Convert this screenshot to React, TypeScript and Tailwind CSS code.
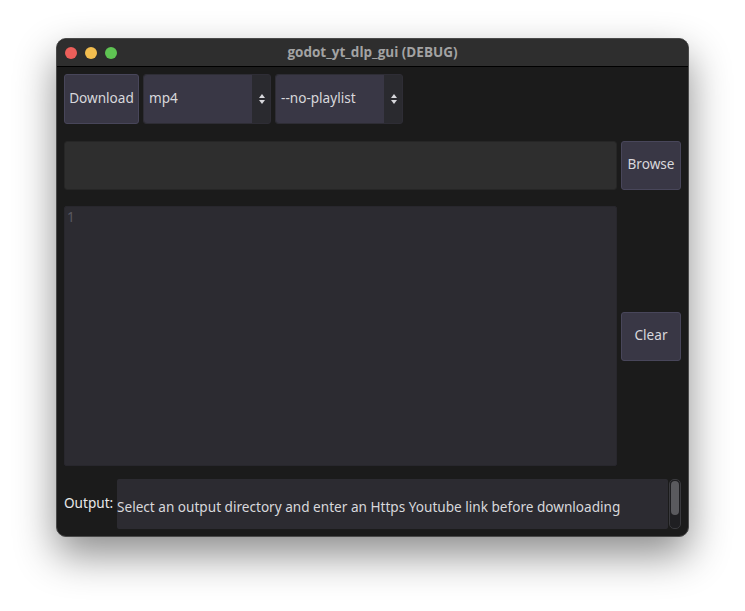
import React from "react";

const font = { fontFamily: '"Noto Sans", "Open Sans", sans-serif' };

function Button({ label, className = "" }: { label: string; className?: string }) {
  return (
    <div
      className={
        "flex items-center justify-center rounded-[3px] border border-[#48465a] bg-[#393745] text-[13.6px] text-[#d8d8dc] " +
        className
      }
    >
      {label}
    </div>
  );
}

function OptionButton({ label }: { label: string }) {
  return (
    <div className="flex h-full w-[128px] rounded-[3px] border border-[#2e2d35] bg-[#2a2a2f]">
      <div className="flex flex-1 items-center rounded-l-[3px] border-r border-[#2a2a2f] bg-[#393745] pb-[1px] pl-[5px] text-[13.6px] text-[#d8d8dc]">
        {label}
      </div>
      <div className="flex w-[17px] items-center justify-center">
        <svg width="6" height="10" viewBox="0 0 6 10">
          <path d="M3 0 L6 4 L0 4 Z" fill="#d8d8dc" />
          <path d="M0 6 L6 6 L3 10 Z" fill="#d8d8dc" />
        </svg>
      </div>
    </div>
  );
}

export default function App() {
  return (
    <div className="min-h-[611px] w-[745px] bg-white pl-[56px] pt-[38px]" style={font}>
      <div className="flex h-[499px] w-[633px] flex-col overflow-hidden rounded-[10px] border border-[#4a4a4a] bg-[#1b1b1b] shadow-[0_18px_40px_rgba(0,0,0,0.45)]">
        {/* title bar */}
        <div className="relative flex h-[28px] shrink-0 items-center justify-center border-b border-black bg-[#2e2e2e]">
          <div className="absolute left-[8px] top-[8px] flex gap-[8px]">
            <span className="h-[12px] w-[12px] rounded-full bg-[#ec5f5a]" />
            <span className="h-[12px] w-[12px] rounded-full bg-[#f3be4f]" />
            <span className="h-[12px] w-[12px] rounded-full bg-[#5fc453]" />
          </div>
          <span className="text-[13.5px] font-bold text-[#a3a3a3]" style={{ fontFamily: '"Open Sans", "Noto Sans", sans-serif' }}>
            godot_yt_dlp_gui (DEBUG)
          </span>
        </div>

        {/* content */}
        <div className="flex flex-1 flex-col pl-[7px] pr-[7px] pt-[7px]">
          <div className="flex h-[50px] gap-[4px]">
            <Button label="Download" className="w-[75px] pb-[1px]" />
            <OptionButton label="mp4" />
            <OptionButton label="--no-playlist" />
          </div>

          <div className="mt-[17px] flex h-[49px] gap-[4px]">
            <div className="w-[553px] rounded-[3px] border border-[#262626] bg-[#2e2e2e]" />
            <Button label="Browse" className="w-[60px] pb-[2px]" />
          </div>

          <div className="mt-[16px] flex h-[260px] items-center gap-[4px]">
            <div className="h-full w-[553px] rounded-[2px] border border-[#28272d] bg-[#2c2b31] px-[2px] text-[13.6px] text-[#5a5960]">
              1
            </div>
            <Button label="Clear" className="h-[49px] w-[60px] pb-[2px]" />
          </div>

          <div className="mt-[13px] flex h-[50px]">
            <div className="flex w-[53px] items-center text-[13.6px] text-[#e8e8e8]">
              <span className="-mt-[1px]">Output:</span>
            </div>
            <div className="flex flex-1 items-center rounded-[2px] bg-[#2c2b31] pt-[6px] text-[13.6px] text-[#d8d8dc]">
              Select an output directory and enter an Https Youtube link before downloading
            </div>
            <div className="ml-[1px] flex w-[12px] rounded-[5px] border border-[#3a3a3e] bg-[#1f1f22] p-[1px]">
              <div className="h-[34px] w-full rounded-[4px] bg-[#5a5a5e]" />
            </div>
          </div>
        </div>
      </div>
    </div>
  );
}
